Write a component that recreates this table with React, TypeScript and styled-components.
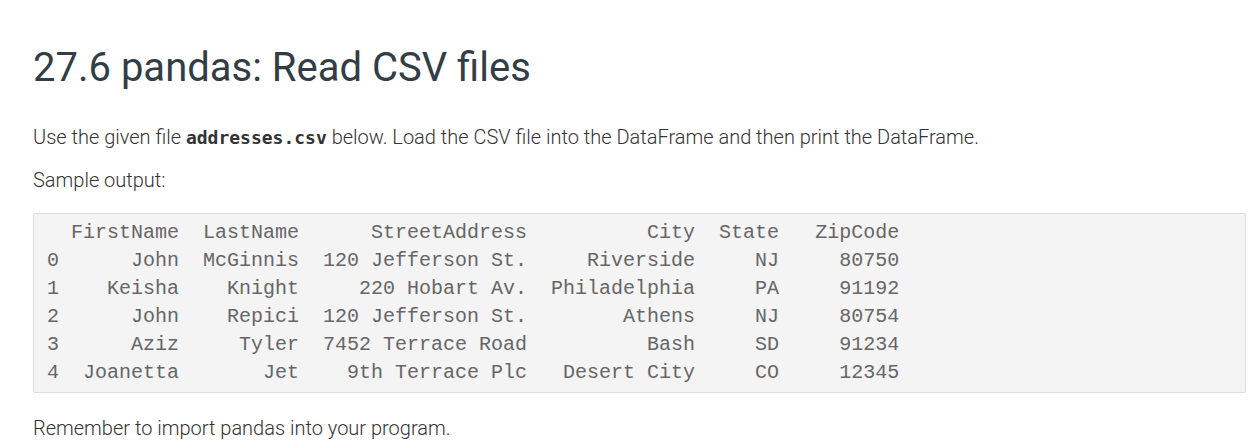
import React from 'react'
import styled, { createGlobalStyle } from 'styled-components'

const GlobalStyle = createGlobalStyle`
    body {
        margin: 0;
        background: #ffffff;
    }
`

const Page = styled.div`
    padding: 0 2px 0 33px;
    font-family: Roboto, 'Liberation Sans', sans-serif;
`

const Title = styled.h1`
    margin: 0;
    padding-top: 42px;
    font-size: 40px;
    font-weight: 400;
    line-height: 52px;
    color: #333d45;
`

const Text = styled.p<{ $gap?: number }>`
    margin: ${(p) => p.$gap ?? 0}px 0 0 0;
    font-size: 20px;
    font-weight: 300;
    line-height: 28px;
    color: #333333;
`

const Code = styled.code`
    font-family: 'DejaVu Sans Mono', monospace;
    font-weight: 700;
    font-size: 18px;
    color: #333333;
`

const Output = styled.pre`
    margin: 19px 0 0 0;
    padding: 5px 13px;
    background: #f4f4f4;
    border: 1px solid #dddddd;
    border-radius: 2px;
    font-family: 'Liberation Mono', 'Courier New', monospace;
    font-size: 20px;
    line-height: 28px;
    color: #666666;
    white-space: pre;
`

const columns = ['FirstName', 'LastName', 'StreetAddress', 'City', 'State', 'ZipCode']
const widths = [10, 10, 19, 14, 7, 10]

const rows = [
    ['John', 'McGinnis', '120 Jefferson St.', 'Riverside', 'NJ', '80750'],
    ['Keisha', 'Knight', '220 Hobart Av.', 'Philadelphia', 'PA', '91192'],
    ['John', 'Repici', '120 Jefferson St.', 'Athens', 'NJ', '80754'],
    ['Aziz', 'Tyler', '7452 Terrace Road', 'Bash', 'SD', '91234'],
    ['Joanetta', 'Jet', '9th Terrace Plc', 'Desert City', 'CO', '12345'],
]

const formatLine = (index: string, cells: string[]) =>
    index + cells.map((c, i) => c.padStart(widths[i])).join('')

const table = [
    formatLine(' ', columns),
    ...rows.map((r, i) => formatLine(String(i), r)),
].join('\n')

export default function App() {
    return (
        <>
            <GlobalStyle />
            <Page>
                <Title>27.6 pandas: Read CSV files</Title>
                <Text $gap={29}>
                    Use the given file <Code>addresses.csv</Code> below. Load the CSV
                    file into the DataFrame and then print the DataFrame.
                </Text>
                <Text $gap={14}>Sample output:</Text>
                <Output>{table}</Output>
                <Text $gap={21}>Remember to import pandas into your program.</Text>
            </Page>
        </>
    )
}
